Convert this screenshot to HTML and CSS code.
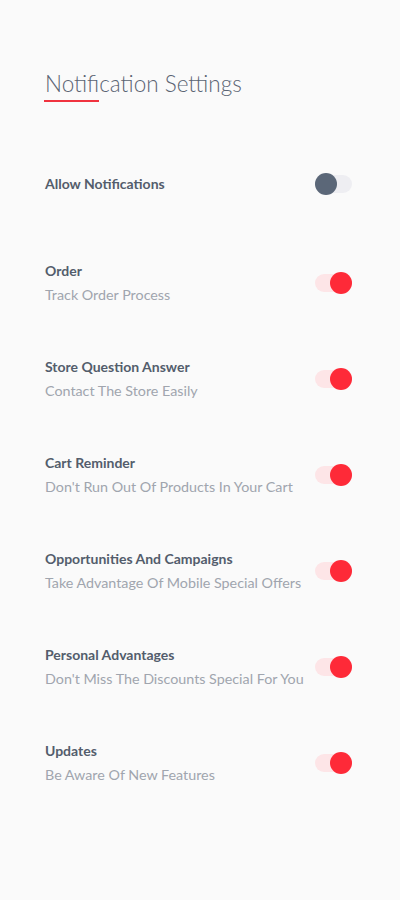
FILE: index.html
```html
<!DOCTYPE html>
<html lang="en">
<head>
    <meta charset="UTF-8">
    <meta name="viewport" content="width=device-width, initial-scale=1.0">
    <title>Notification Settings</title>
    <link rel="stylesheet" href="styles.css">
</head>
<body>
    <div class="page">
        <h1 class="title">Notification Settings</h1>

        <div class="row main-row">
            <div class="label">Allow Notifications</div>
            <span class="toggle"><span class="knob"></span></span>
        </div>

        <div class="list">
            <div class="row">
                <div>
                    <div class="label">Order</div>
                    <div class="hint">Track Order Process</div>
                </div>
                <span class="toggle on"><span class="knob"></span></span>
            </div>
            <div class="row">
                <div>
                    <div class="label">Store Question Answer</div>
                    <div class="hint">Contact The Store Easily</div>
                </div>
                <span class="toggle on"><span class="knob"></span></span>
            </div>
            <div class="row">
                <div>
                    <div class="label">Cart Reminder</div>
                    <div class="hint">Don't Run Out Of Products In Your Cart</div>
                </div>
                <span class="toggle on"><span class="knob"></span></span>
            </div>
            <div class="row">
                <div>
                    <div class="label">Opportunities And Campaigns</div>
                    <div class="hint">Take Advantage Of Mobile Special Offers</div>
                </div>
                <span class="toggle on"><span class="knob"></span></span>
            </div>
            <div class="row">
                <div>
                    <div class="label">Personal Advantages</div>
                    <div class="hint">Don't Miss The Discounts Special For You</div>
                </div>
                <span class="toggle on"><span class="knob"></span></span>
            </div>
            <div class="row">
                <div>
                    <div class="label">Updates</div>
                    <div class="hint">Be Aware Of New Features</div>
                </div>
                <span class="toggle on"><span class="knob"></span></span>
            </div>
        </div>
    </div>
</body>
</html>
```

FILE: styles.css
```css
body {
    margin: 0;
    background: #fafafa;
    font-family: Lato, "Open Sans", sans-serif;
    color: #515b6a;
}
.page {
    padding: 70px 48px 0 45px;
}
.title {
    margin: 0;
    font-size: 22.5px;
    font-weight: 300;
    line-height: 28px;
    color: #5a6473;
    padding-bottom: 6px;
}
.title::after {
    content: "";
    display: block;
    width: 55px;
    height: 2px;
    background: #f0333f;
    margin-top: 2px;
    margin-left: -1px;
}
.row {
    display: flex;
    align-items: center;
    justify-content: space-between;
    min-height: 44px;
}
.main-row {
    margin-top: 54px;
}
.list {
    margin-top: 55px;
    display: flex;
    flex-direction: column;
    gap: 52px;
}
.label {
    font-size: 14px;
    font-weight: 700;
    line-height: 20px;
    color: #535d6c;
}
.hint {
    font-size: 14.3px;
    font-weight: 400;
    line-height: 20px;
    margin-top: 4px;
    color: #a0a5ae;
}
.toggle {
    position: relative;
    width: 37px;
    height: 18px;
    border-radius: 9px;
    background: #eeeef2;
    flex-shrink: 0;
}
.knob {
    position: absolute;
    top: -2px;
    left: 0;
    width: 22px;
    height: 22px;
    border-radius: 50%;
    background: #5b6778;
}
.toggle.on {
    background: #fde5e7;
}
.toggle.on .knob {
    left: auto;
    right: 0;
    background: #fe2a38;
}
```
